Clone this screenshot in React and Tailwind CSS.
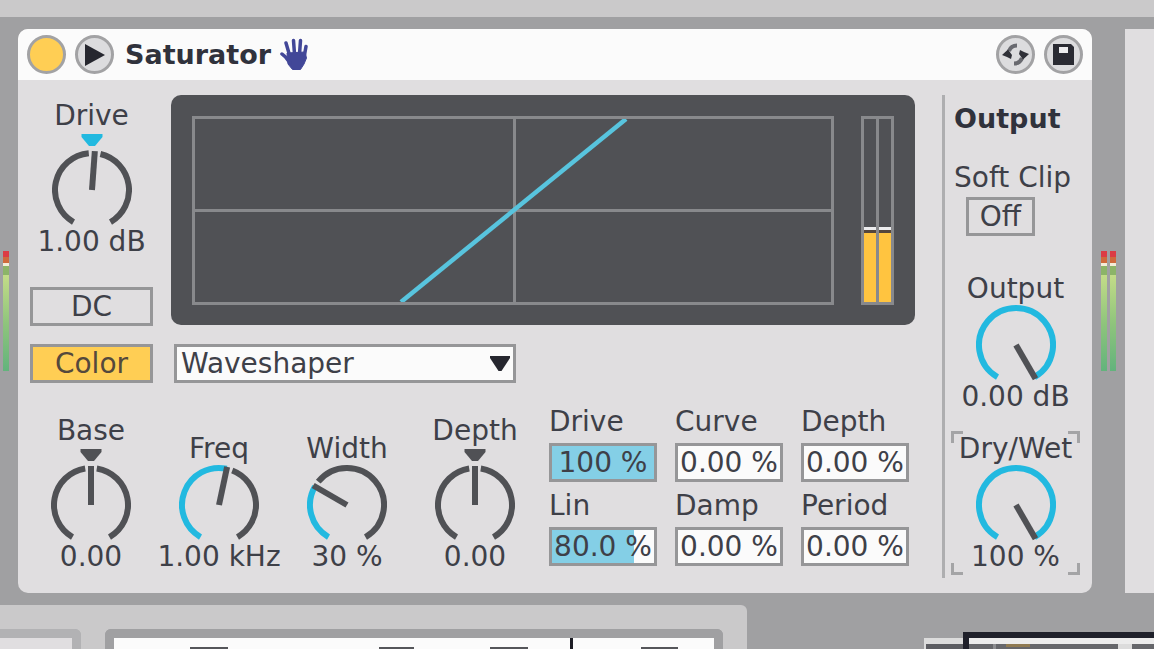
import { useId, useState } from "react";

const SWEEP = 150;

function polar(cx, cy, r, deg) {
  const a = (deg * Math.PI) / 180;
  return [cx + r * Math.sin(a), cy - r * Math.cos(a)];
}

function arc(cx, cy, r, from, to) {
  const [x1, y1] = polar(cx, cy, r, from);
  const [x2, y2] = polar(cx, cy, r, to);
  return `M${x1} ${y1}A${r} ${r} 0 ${to - from > 180 ? 1 : 0} 1 ${x2} ${y2}`;
}

function Knob({ label, text, initial, min = 0, max = 100, marker }) {
  const id = useId();
  const [value, setValue] = useState(initial);
  const angle = -SWEEP + ((value - min) / (max - min)) * SWEEP * 2;
  const bipolar = Boolean(marker);
  const cy = bipolar ? 56 : 42;
  const height = bipolar ? 93 : 79;
  const [nx, ny] = polar(40, cy, 39, angle);
  const restFrom = angle + 9;
  return (
    <div className="flex flex-col items-center whitespace-nowrap">
      <label htmlFor={id} className="h-7">
        {label}
      </label>
      <div className={bipolar ? "relative mt-[5px]" : "relative mt-px"}>
        <svg width="80" height={height} viewBox={`0 0 80 ${height}`} fill="none" className="block" aria-hidden="true">
          {bipolar && <path d="M29.500 0H50.500V3L43 12H37L29.500 3Z" fill={marker} />}
          {bipolar ? (
            <path d={arc(40, cy, 37, -SWEEP, Math.min(angle - 9, -5))} stroke="#505155" strokeWidth="6" />
          ) : (
            <path d={arc(40, cy, 37, -SWEEP, angle)} stroke="#22b9e0" strokeWidth="6" />
          )}
          {restFrom < SWEEP && <path d={arc(40, cy, 37, restFrom, SWEEP)} stroke="#505155" strokeWidth="6" />}
          <path d={`M40 ${cy}L${nx} ${ny}`} stroke="#505155" strokeWidth="6" />
        </svg>
        <input
          id={id}
          type="range"
          min={min}
          max={max}
          step="any"
          value={value}
          onChange={(e) => setValue(Number(e.target.value))}
          className="absolute inset-0 h-full w-full cursor-pointer opacity-0"
        />
      </div>
      <output htmlFor={id} className="h-7">
        {text}
      </output>
    </div>
  );
}

function Param({ label, text, fill = 0 }) {
  const id = useId();
  return (
    <div className="flex flex-col gap-2">
      <label htmlFor={id} className="h-7">
        {label}
      </label>
      <input
        id={id}
        type="text"
        defaultValue={text}
        className="h-[39px] w-full border-3 border-[#969698] bg-[#fbfbfb] p-0 text-center outline-none"
        style={fill ? { backgroundImage: `linear-gradient(to right, #84cfe6 ${fill}%, #fbfbfb ${fill}%)` } : undefined}
      />
    </div>
  );
}

function RoundButton({ label, className, children }) {
  return (
    <button
      type="button"
      aria-label={label}
      className={`flex size-[39px] items-center justify-center rounded-full border-3 border-[#a2a2a4] ${className}`}
    >
      {children}
    </button>
  );
}

function TrackMeter() {
  return (
    <div className="flex h-[120px] w-[6px] flex-col">
      <div className="h-[6px] bg-[#dc3c44]" />
      <div className="h-[6px] bg-[#cf6a3c]" />
      <div className="h-[3px] bg-[#f3ecd8]" />
      <div className="h-[9px] bg-[#8cb468]" />
      <div className="flex-1 bg-linear-to-b from-[#c3dc88] via-[#8fc47c] to-[#62b37c]" />
    </div>
  );
}

function HandIcon() {
  return (
    <svg width="28" height="33" viewBox="0 0 28 33" fill="#424798" stroke="#424798" aria-hidden="true">
      <path d="M7 15L25 14L26.500 20L24 26L20.500 31.500H12.500L8 26Z" strokeWidth="1" />
      <path d="M9.500 17L6 5M14.500 16L13.500 2.500M19.500 16L20.500 2.500M24.500 17L26 8.500" strokeWidth="3.500" strokeLinecap="round" fill="none" />
      <path d="M10 25L5.500 19L2 16" strokeWidth="3.500" strokeLinecap="round" fill="none" />
    </svg>
  );
}

function Transfer() {
  return (
    <svg
      className="block h-[189px] min-w-0 flex-1"
      viewBox="0 0 642 189"
      preserveAspectRatio="none"
      fill="none"
      role="img"
      aria-label="Transfer curve"
    >
      <path d="M322.500 0V189M0 94.500H642" stroke="#88898c" strokeWidth="3" />
      <path d="M209 186L434 3" stroke="#58c4de" strokeWidth="4.500" />
      <rect x="1.500" y="1.500" width="639" height="186" stroke="#88898c" strokeWidth="3" />
    </svg>
  );
}

function LevelMeter() {
  return (
    <div className="grid h-[189px] w-[33px] grid-cols-2 gap-[3px] border-3 border-[#88898c] bg-[#88898c]">
      {[0, 1].map((n) => (
        <div key={n} className="flex flex-col justify-end bg-[#505155]">
          <div className="h-[3px] bg-[#ececee]" />
          <div className="h-[3px] bg-[#54463c]" />
          <div className="h-[69px] bg-[#ffc440]" />
        </div>
      ))}
    </div>
  );
}

function FocusCorners() {
  return (
    <>
      <span className="absolute top-0 left-0 size-3 border-t-3 border-l-3 border-[#a4a4a6]" />
      <span className="absolute top-0 right-0 size-3 border-t-3 border-r-3 border-[#a4a4a6]" />
      <span className="absolute bottom-0 left-0 size-3 border-b-3 border-l-3 border-[#a4a4a6]" />
      <span className="absolute right-0 bottom-0 size-3 border-r-3 border-b-3 border-[#a4a4a6]" />
    </>
  );
}

function Header() {
  return (
    <header className="flex h-[51px] items-center gap-[9px] bg-[#fbfbfb] px-[9px]">
      <RoundButton label="Device on" className="bg-[#ffce54]" />
      <RoundButton label="Show controls" className="bg-[#dcdcde]">
        <svg width="21" height="22" viewBox="0 0 21 22" fill="#26272f" aria-hidden="true">
          <path d="M1 0L21 11L1 22Z" />
        </svg>
      </RoundButton>
      <h1 className="pt-px pl-[2px] text-[27px] font-bold text-[#30323c]">Saturator</h1>
      <HandIcon />
      <div className="ml-auto flex gap-[9px]">
        <RoundButton label="Hot-swap preset" className="bg-[#dcdcde]">
          <svg width="33" height="33" viewBox="0 0 33 33" fill="none" aria-hidden="true">
            <path d="M10 13Q12 7.500 18 7.500M23 20Q21 25.500 15 25.500" stroke="#68696f" strokeWidth="4" />
            <path d="M3 17L9 11.500L13 17L12 21L8 19ZM30 16L24 21.500L20 16L21 12L25 14Z" fill="#303138" />
          </svg>
        </RoundButton>
        <RoundButton label="Save preset" className="bg-[#dcdcde]">
          <svg width="21" height="21" viewBox="0 0 21 21" aria-hidden="true">
            <path d="M0 0H18L21 3V21H0Z" fill="#2a2b33" />
            <path d="M6 3H15V9H6Z" fill="#ececee" />
          </svg>
        </RoundButton>
      </div>
    </header>
  );
}

function MainSection() {
  return (
    <div className="flex min-w-0 flex-1 flex-col pr-[27px] pb-2 pl-3">
      <div className="flex gap-[18px]">
        <div className="flex w-[123px] shrink-0 flex-col pt-[6px]">
          <Knob label="Drive" text="1.00 dB" initial={1} min={-36} max={36} marker="#22b9e0" />
          <button type="button" className="mt-8 h-[39px] border-3 border-[#969698]">
            DC
          </button>
          <button
            type="button"
            aria-pressed="true"
            className="mt-[18px] h-[39px] border-3 border-[#969698] bg-[#ffce54] text-[#55493c]"
          >
            Color
          </button>
        </div>
        <div className="flex min-w-0 flex-1 flex-col">
          <div className="flex gap-[27px] rounded-[10px] bg-[#505155] px-[21px] pt-[21px] pb-5">
            <Transfer />
            <LevelMeter />
          </div>
          <div className="relative mt-[19px] ml-[3px] w-[342px]">
            <select
              aria-label="Curve type"
              className="block h-[39px] w-full appearance-none border-3 border-[#969698] bg-[#fbfbfb] py-0 pl-1 outline-none"
            >
              <option>Waveshaper</option>
            </select>
            <svg
              width="20"
              height="15"
              viewBox="0 0 20 15"
              fill="#26272f"
              aria-hidden="true"
              className="pointer-events-none absolute top-3 right-[6px]"
            >
              <path d="M0 0H20V2L11.500 15H8.500L0 2Z" />
            </svg>
          </div>
        </div>
      </div>
      <div className="mt-6 flex gap-[13px]">
        <div className="grid w-[506px] grid-cols-4 items-end gap-[6px]">
          <Knob label="Base" text="0.00" initial={0} min={-100} max={100} marker="#505155" />
          <Knob label="Freq" text="1.00 kHz" initial={54} />
          <Knob label="Width" text="30 %" initial={30} />
          <Knob label="Depth" text="0.00" initial={0} min={-100} max={100} marker="#505155" />
        </div>
        <div className="grid h-[163px] w-[360px] grid-cols-3 content-start gap-x-[18px] gap-y-[9px]">
          <Param label="Drive" text="100 %" fill={100} />
          <Param label="Curve" text="0.00 %" />
          <Param label="Depth" text="0.00 %" />
          <Param label="Lin" text="80.0 %" fill={80} />
          <Param label="Damp" text="0.00 %" />
          <Param label="Period" text="0.00 %" />
        </div>
      </div>
    </div>
  );
}

function OutputSection() {
  return (
    <div className="flex w-[150px] shrink-0 flex-col border-l-3 border-[#aeaeb0] pr-3 pb-[3px] pl-[6px]">
      <h2 className="mt-[9px] h-7 pl-[3px] text-[27px] font-bold text-[#30323c]">Output</h2>
      <span className="mt-[31px] h-7 pl-[3px] whitespace-nowrap" id="soft-clip">
        Soft Clip
      </span>
      <button
        type="button"
        aria-labelledby="soft-clip"
        className="mt-[6px] ml-[15px] h-[39px] w-[69px] border-3 border-[#969698]"
      >
        Off
      </button>
      <div className="mt-[38px]">
        <Knob label="Output" text="0.00 dB" initial={100} />
      </div>
      <div className="relative mt-auto pt-[3px] pb-[5px]">
        <FocusCorners />
        <Knob label="Dry/Wet" text="100 %" initial={100} />
      </div>
    </div>
  );
}

function TrackOverview() {
  return (
    <div className="flex w-[618px] flex-col rounded-t-md border-x-9 border-t-9 border-[#a0a0a2] bg-[#fbfbfb]">
      <div className="flex h-full items-stretch">
        <div className="mt-[9px] ml-[76px] w-[38px] bg-[#55565a]" />
        <div className="mt-[9px] ml-[151px] w-[35px] bg-[#55565a]" />
        <div className="mt-[9px] ml-[76px] w-[38px] bg-[#55565a]" />
        <div className="ml-[42px] w-[3px] bg-[#1c1d24]" />
        <div className="mt-[9px] ml-[68px] w-[37px] bg-[#55565a]" />
      </div>
    </div>
  );
}

function ChainOverview() {
  return (
    <div className="mt-[27px] ml-auto flex w-[230px]">
      <div className="mt-[6px] w-[39px] border-t-6 border-l-2 border-[#dcdcdc] bg-[#5c5d62]" />
      <div className="flex flex-1 border-t-6 border-l-6 border-[#1f202a]">
        <div className="flex flex-1 border-t-6 border-[#ececec] bg-[#66676b]">
          <div className="ml-6 w-[3px] bg-[#8c8d90]" />
          <div className="ml-[10px] h-[3px] w-6 bg-[#8f7a52]" />
          <div className="ml-auto w-[14px] bg-[#dcdcdc]" />
          <div className="w-[22px]" />
        </div>
      </div>
    </div>
  );
}

export default function App() {
  return (
    <div className="flex h-screen min-w-[1100px] flex-col overflow-hidden bg-[#a0a0a2] font-['DejaVu_Sans',sans-serif] text-[28px] leading-[30px] text-[#3e4048]">
      <div className="h-[17px] shrink-0 bg-[#cac9ca]" />
      <div className="mt-3 flex shrink-0">
        <div className="w-[18px] pt-[222px] pl-[3px]">
          <TrackMeter />
        </div>
        <main className="min-w-0 flex-1 overflow-hidden rounded-[10px] bg-[#e0dee0]">
          <Header />
          <div className="flex pt-[15px] pb-[15px]">
            <MainSection />
            <OutputSection />
          </div>
        </main>
        <div className="flex w-[33px] gap-[3px] pt-[222px] pl-[9px]">
          <TrackMeter />
          <TrackMeter />
        </div>
        <div className="w-[29px] bg-[#e0dee0]" />
      </div>
      <div className="flex min-h-0 flex-1 pt-3">
        <div className="flex w-[747px] gap-6 rounded-tr-md bg-[#cac9ca] pt-6">
          <div className="w-[81px] rounded-tr-md border-t-9 border-r-9 border-[#b2b2b4] bg-[#e0dee0]" />
          <TrackOverview />
        </div>
        <ChainOverview />
      </div>
    </div>
  );
}
